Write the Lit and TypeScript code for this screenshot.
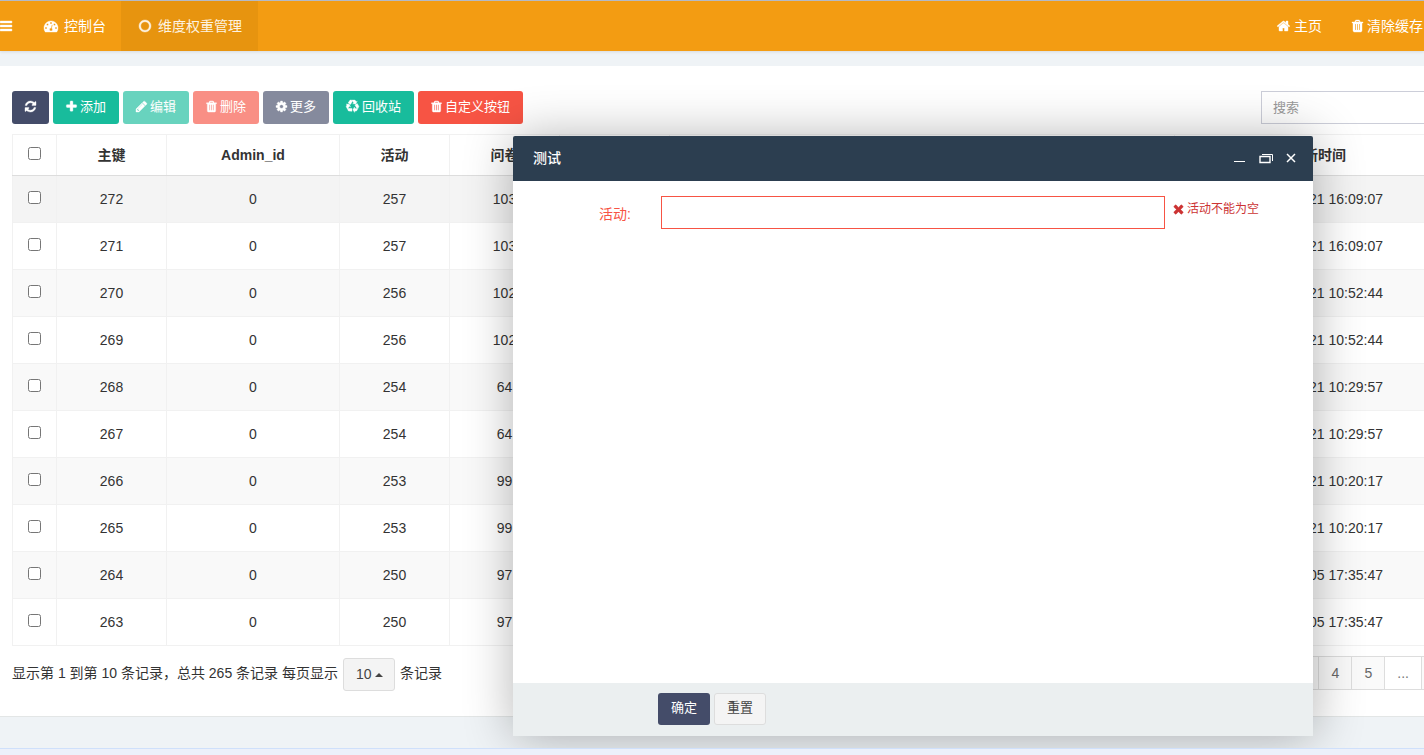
import { LitElement, html, css, svg } from "lit";
import { customElement, property } from "lit/decorators.js";

// Glyphs on a 1792 grid: [advance width, outline]
const GLYPHS: Record<string, [number, string]> = {
  bars: [1536, "M1664 1344v128q0 26-19 45t-45 19h-1408q-26 0-45-19t-19-45v-128q0-26 19-45t45-19h1408q26 0 45 19t19 45zm0-512v128q0 26-19 45t-45 19h-1408q-26 0-45-19t-19-45v-128q0-26 19-45t45-19h1408q26 0 45 19t19 45zm0-512v128q0 26-19 45t-45 19h-1408q-26 0-45-19t-19-45v-128q0-26 19-45t45-19h1408q26 0 45 19t19 45z"],
  circle: [1536, "M896 352q-148 0-273 73t-198 198-73 273 73 273 198 198 273 73 273-73 198-198 73-273-73-273-198-198-273-73zm768 544q0 209-103 385.500t-279.500 279.500-385.500 103-385.500-103-279.500-279.500-103-385.500 103-385.500 279.500-279.500 385.500-103 385.500 103 279.500 279.500 103 385.500z"],
  plus: [1408, "M1600 736v192q0 40-28 68t-68 28h-416v416q0 40-28 68t-68 28h-192q-40 0-68-28t-28-68v-416h-416q-40 0-68-28t-28-68v-192q0-40 28-68t68-28h416v-416q0-40 28-68t68-28h192q40 0 68 28t28 68v416h416q40 0 68 28t28 68z"],
  pencil: [1536, "M491 1536l91-91-235-235-91 91v107h128v128h107zm523-928q0-22-22-22-10 0-17 7l-542 542q-7 7-7 17 0 22 22 22 10 0 17-7l542-542q7-7 7-17zm-54-192l416 416-832 832h-416v-416zm683 96q0 53-37 90l-166 166-416-416 166-165q36-38 90-38 53 0 91 38l235 234q37 39 37 91z"],
  trash: [1408, "M704 1376v-704q0-14-9-23t-23-9h-64q-14 0-23 9t-9 23v704q0 14 9 23t23 9h64q14 0 23-9t9-23zm256 0v-704q0-14-9-23t-23-9h-64q-14 0-23 9t-9 23v704q0 14 9 23t23 9h64q14 0 23-9t9-23zm256 0v-704q0-14-9-23t-23-9h-64q-14 0-23 9t-9 23v704q0 14 9 23t23 9h64q14 0 23-9t9-23zm-544-992h448l-48-117q-7-9-17-11h-317q-10 2-17 11zm928 32v64q0 14-9 23t-23 9h-96v948q0 83-47 143.500t-113 60.500h-832q-66 0-113-58.500t-47-141.500v-952h-96q-14 0-23-9t-9-23v-64q0-14 9-23t23-9h309l70-167q15-37 54-63t79-26h320q40 0 79 26t54 63l70 167h309q14 0 23 9t9 23z"],
  cog: [1536, "M1152 896q0-106-75-181t-181-75-181 75-75 181 75 181 181 75 181-75 75-181zm512-109v222q0 12-8 23t-20 13l-185 28q-19 54-39 91 35 50 107 138 10 12 10 25t-9 23q-27 37-99 108t-94 71q-12 0-26-9l-138-108q-44 23-91 38-16 136-29 186-7 28-36 28h-222q-14 0-24.500-8.500t-11.500-21.500l-28-184q-49-16-90-37l-141 107q-10 9-25 9-14 0-25-11-126-114-165-168-7-10-7-23 0-12 8-23 15-21 51-66.500t54-70.500q-27-50-41-99l-183-27q-13-2-21-12.500t-8-23.500v-222q0-12 8-23t19-13l186-28q14-46 39-92-40-57-107-138-10-12-10-24 0-10 9-23 26-36 98.500-107.500t94.500-71.500q13 0 26 10l138 107q44-23 91-38 16-136 29-186 7-28 36-28h222q14 0 24.500 8.500t11.500 21.500l28 184q49 16 90 37l142-107q9-9 24-9 13 0 25 10 129 119 165 170 7 8 7 22 0 12-8 23-15 21-51 66.500t-54 70.500q26 50 41 98l183 28q13 2 21 12.500t8 23.500z"],
  refresh: [1536, "M1639 1056q0 5-1 7-64 268-268 434.500t-478 166.500q-146 0-282.500-55t-243.500-157l-129 129q-19 19-45 19t-45-19-19-45v-448q0-26 19-45t45-19h448q26 0 45 19t19 45-19 45l-137 137q71 66 161 102t187 36q134 0 250-65t186-179q11-17 53-117 8-23 30-23h192q13 0 22.500 9.500t9.500 22.500zm25-800v448q0 26-19 45t-45 19h-448q-26 0-45-19t-19-45 19-45l138-138q-148-137-349-137-134 0-250 65t-186 179q-11 17-53 117-8 23-30 23h-199q-13 0-22.500-9.500t-9.500-22.500v-7q65-268 270-434.500t480-166.500q146 0 284 55.500t245 156.500l130-129q19-19 45-19t45 19 19 45z"],
  home: [1664, "M1472 992v480q0 26-19 45t-45 19h-384v-384h-256v384h-384q-26 0-45-19t-19-45v-480q0-1 .5-3t.5-3l575-474 575 474q1 2 1 6zm223-69l-62 74q-8 9-21 11h-3q-13 0-21-7l-692-577-692 577q-12 8-24 7-13-2-21-11l-62-74q-8-10-7-23.500t11-21.500l719-599q32-26 76-26t76 26l244 204v-195q0-14 9-23t23-9h192q14 0 23 9t9 23v408l219 182q10 8 11 21.500t-7 23.500z"],
  dashboard: [1792, "M384 1152q0-53-37.500-90.500t-90.500-37.500-90.500 37.500-37.500 90.500 37.500 90.500 90.500 37.500 90.500-37.500 37.500-90.500zm192-448q0-53-37.500-90.500t-90.500-37.500-90.500 37.500-37.500 90.500 37.500 90.500 90.500 37.500 90.500-37.500 37.500-90.500zm428 481l101-382q6-26-7.500-48.500t-38.500-29.500-48 6.500-30 39.500l-101 382q-60 5-107 43.500t-63 98.500q-20 77 20 146t117 89 146-20 89-117q16-60-6-117t-72-91zm660-33q0-53-37.500-90.500t-90.500-37.500-90.500 37.500-37.500 90.500 37.500 90.500 90.500 37.500 90.500-37.500 37.500-90.500zm-640-640q0-53-37.500-90.500t-90.500-37.500-90.500 37.500-37.500 90.500 37.500 90.500 90.500 37.500 90.500-37.500 37.500-90.500zm448 192q0-53-37.500-90.500t-90.500-37.500-90.500 37.500-37.500 90.500 37.500 90.500 90.500 37.500 90.500-37.500 37.500-90.500zm320 448q0 261-141 483-19 29-54 29h-1402q-35 0-54-29-141-221-141-483 0-182 71-348t191-286 286-191 348-71 348 71 286 191 191 286 71 348z"],
  times: [1408, "M1490 1322q0 40-28 68l-136 136q-28 28-68 28t-68-28l-294-294-294 294q-28 28-68 28t-68-28l-136-136q-28-28-28-68t28-68l294-294-294-294q-28-28-28-68t28-68l136-136q28-28 68-28t68 28l294 294 294-294q28-28 68-28t68 28l136 136q28 28 28 68t-28 68l-294 294 294 294q28 28 28 68z"],
  recycle: [1792, "M836 1169l-15 368-2 22-420-29q-36-3-67-31.500t-47-65.500q-11-27-14.500-55t4-65 12-55 21.500-64 19-53q78 12 509 28zm-387-586l180 379-147-92q-63 72-111.500 144.500t-72.500 125-39.500 94.500-18.500 63l-4 21-190-357q-17-26-18-56t6-47l8-18q35-63 114-188l-140-86zm1231 517l-188 359q-12 29-36.500 46.500t-43.500 20.500l-18 4q-71 7-219 12l8 164-230-367 211-362 7 173q170 16 283 5t170-33zm-785-924q-47 63-265 435l-317-187-19-12 225-356q20-31 60-45t80-10q24 2 48.500 12t42 21 41.500 33 36 34.500 36 39.500 32 35zm655 307l212 363q18 37 12.500 76t-27.500 74q-13 20-33 37t-38 28-48.500 22-47 16-51.500 14-46 12q-34-72-265-436l313-195zm-143-226l142-83-220 373-419-20 151-86q-34-89-75-166t-75.500-123.500-64.500-80-47-46.500l-17-13 405 1q31-3 58 10.500t39 28.500l11 15q39 61 112 190z"],
};

@customElement("fa-icon")
class FaIcon extends LitElement {
  static styles = css`
    :host { display: inline-flex; flex: none; }
    svg { display: block; fill: currentColor; stroke: currentColor; stroke-width: 50; }
  `;
  @property() name = "plus";
  @property({ type: Number }) size = 13;
  render() {
    const [advance, outline] = GLYPHS[this.name];
    const width = Math.floor((advance / 1792) * this.size + 0.8);
    return html`<svg aria-hidden="true" width=${width} height=${this.size} overflow="visible"
      viewBox="${(1792 - advance) / 2} 0 ${advance} 1792">${svg`<path d=${outline}></path>`}</svg>`;
  }
}

const TOOLS = [
  { icon: "refresh", text: "", tone: "navy" },
  { icon: "plus", text: "添加", tone: "green" },
  { icon: "pencil", text: "编辑", tone: "green", off: true },
  { icon: "trash", text: "删除", tone: "red", off: true },
  { icon: "cog", text: "更多", tone: "navy", off: true },
  { icon: "recycle", text: "回收站", tone: "green" },
  { icon: "trash", text: "自定义按钮", tone: "red" },
];

const ROWS = [
  [272, 257, 103, "21 16:09:07"],
  [271, 257, 103, "21 16:09:07"],
  [270, 256, 102, "21 10:52:44"],
  [269, 256, 102, "21 10:52:44"],
  [268, 254, 64, "21 10:29:57"],
  [267, 254, 64, "21 10:29:57"],
  [266, 253, 99, "21 10:20:17"],
  [265, 253, 99, "21 10:20:17"],
  [264, 250, 97, "05 17:35:47"],
  [263, 250, 97, "05 17:35:47"],
];

@customElement("app-root")
class AppRoot extends LitElement {
  static styles = css`
    :host {
      display: flex;
      flex-direction: column;
      position: relative;
      height: 100vh;
      overflow: hidden;
      box-sizing: border-box;
      border-top: 1px solid #b4bac6;
      background: #eff3f6;
      color: #333;
      font: 14px/20px "Liberation Sans", "Noto Sans CJK SC", sans-serif;
    }
    * { box-sizing: border-box; }
    button, input, select { font-family: inherit; margin: 0; }
    a { color: inherit; text-decoration: none; }

    .top {
      display: flex;
      flex: none;
      height: 50px;
      background: #f39c12;
      color: #fff;
      box-shadow: 0 1px 3px rgba(0, 0, 0, 0.1);
    }
    .top a, .menu { display: flex; align-items: center; }
    .menu { padding: 0 15px 0 0; border: 0; background: none; color: inherit; }
    .tab { padding: 0 15px; gap: 4px; }
    .tab.current { padding-right: 16px; background: #e7940f; color: #fdf3e2; }
    .slot { display: flex; width: 18px; justify-content: center; }
    .links { display: flex; gap: 30px; margin-left: auto; padding-right: 1px; }
    .links a { gap: 4px; }

    .panel {
      flex: none;
      margin-top: 15px;
      padding: 25px 0 26px 12px;
      width: calc(100% + 38px);
      background: #fff;
      border-bottom: 1px solid #e3e6e6;
    }
    .tools { display: flex; gap: 4px; height: 33px; margin-bottom: 10px; }
    .btn {
      display: flex;
      align-items: center;
      gap: 3px;
      padding: 0 12px 2px;
      border: 1px solid transparent;
      border-radius: 3px;
      color: #fff;
      font-size: 13px;
      line-height: 20px;
      white-space: nowrap;
    }
    .tools .btn { padding: 0 12px 2px; }
    .navy { background: #444c69; }
    .green { background: #18bc9c; }
    .red { background: #f75444; }
    .plain { background: #f4f4f4; border-color: #ddd; color: #444; }
    .off { opacity: 0.65; }
    .search {
      margin-left: auto;
      width: 201px;
      padding: 0 11px;
      border: 1px solid #ccced9;
      border-radius: 0;
      font-size: 13px;
      outline: 0;
    }
    .search::placeholder { color: #999; }

    table { width: 100%; border-collapse: collapse; table-layout: fixed; }
    th, td {
      padding: 0;
      height: 47px;
      border: 1px solid #f1f1f1;
      text-align: center;
      white-space: nowrap;
    }
    th { height: 41px; border-bottom-color: #ddd; }
    tbody tr:nth-child(odd) { background: #f9f9f9; }
    tbody tr.hovered { background: #f4f4f4; }
    td input, th input { display: block; width: 13px; height: 13px; margin: 0 auto 3px; }
    .c-check { width: 44px; }
    .c-id { width: 110px; }
    .c-admin { width: 173px; }
    .c-time { width: 287px; }

    .bottom { display: flex; justify-content: space-between; height: 34px; margin-top: 10px; }
    .info { display: flex; align-items: center; gap: 5px; }
    .size { position: relative; display: flex; margin-top: 2px; }
    .size select {
      width: 52px;
      height: 33px;
      padding: 0 12px;
      appearance: none;
      border: 1px solid #ddd;
      border-radius: 3px;
      background: #f4f4f4;
      color: #444;
      font-size: 14px;
    }
    .caret {
      position: absolute;
      right: 12px;
      top: 15px;
      border: 4px solid transparent;
      border-top: 0;
      border-bottom-color: #444;
      pointer-events: none;
    }
    .pages { display: flex; margin: 0; padding: 0; list-style: none; }
    .pages a {
      display: flex;
      align-items: center;
      justify-content: center;
      height: 34px;
      min-width: 34px;
      margin-left: -1px;
      padding: 0 12px;
      border: 1px solid #ddd;
      background: #fafafa;
      color: #666;
    }
    .pages a.gap { background: #fff; color: #777; }
    .pages a.end { width: 41px; }

    .status {
      flex: none;
      margin-top: auto;
      height: 7px;
      border-top: 1px solid #cfe0fb;
      background: #ecf0fa;
      position: relative;
      z-index: 2;
    }

    .dialog {
      position: absolute;
      z-index: 1;
      left: 513px;
      top: 135px;
      width: 800px;
      height: 600px;
      display: flex;
      flex-direction: column;
      background: #fff;
      border-radius: 2px;
      box-shadow: 1px 1px 50px rgba(0, 0, 0, 0.3);
    }
    .title {
      display: flex;
      align-items: center;
      height: 45px;
      padding: 0 17px 2px 20px;
      border-radius: 2px 2px 0 0;
      background: #2c3e50;
      color: #fff;
    }
    .title h2 { margin: 0 auto 0 0; font-size: 14px; line-height: 20px; font-weight: 500; }
    .title button { display: flex; padding: 0; border: 0; background: none; color: #fff; }
    .title button + button { margin-left: 13px; }
    .form { flex: 1; padding-top: 15px; }
    .field { display: flex; color: #f75444; }
    .field label { width: 18.5%; padding: 8px 30px 0 0; text-align: right; }
    .field input {
      width: 63%;
      height: 33px;
      padding: 0 12px;
      border: 1px solid #f75444;
      border-radius: 0;
      outline: 0;
    }
    .error { display: flex; align-items: center; gap: 3px; height: 26px; padding-left: 8px; color: #c33; font-size: 12px; }
    .actions { display: flex; gap: 4px; padding: 10px 0 11px 145px; background: #ebeff0; }
    .actions .btn { height: 32px; }
  `;

  render() {
    return html`
      <header class="top">
        <button class="menu" aria-label="菜单"><fa-icon name="bars" size="14"></fa-icon></button>
        <a class="tab" href="#"><span class="slot"><fa-icon name="dashboard" size="14"></fa-icon></span>控制台</a>
        <a class="tab current" href="#"><span class="slot"><fa-icon name="circle" size="14"></fa-icon></span>维度权重管理</a>
        <nav class="links">
          <a href="#"><fa-icon name="home" size="14"></fa-icon>主页</a>
          <a href="#"><fa-icon name="trash" size="14"></fa-icon>清除缓存</a>
        </nav>
      </header>

      <main class="panel">
        <div class="tools">
          ${TOOLS.map((t) => html`<button class="btn ${t.tone} ${t.off ? "off" : ""}" aria-label=${t.text || "刷新"}>
            <fa-icon name=${t.icon}></fa-icon>${t.text}</button>`)}
          <input class="search" type="search" placeholder="搜索" aria-label="搜索" />
        </div>

        <table>
          <colgroup>
            <col class="c-check" /><col class="c-id" /><col class="c-admin" /><col class="c-id" />
            <col class="c-id" /><col class="c-id" /><col /><col class="c-time" />
          </colgroup>
          <thead>
            <tr>
              <th><input type="checkbox" aria-label="全选" /></th>
              <th>主键</th><th>Admin_id</th><th>活动</th><th>问卷</th><th></th><th></th><th>更新时间</th>
            </tr>
          </thead>
          <tbody>
            ${ROWS.map(([id, act, paper, time], i) => html`<tr class=${i === 0 ? "hovered" : ""}>
              <td><input type="checkbox" aria-label=${id} /></td>
              <td>${id}</td><td>0</td><td>${act}</td><td>${paper}</td><td></td><td></td><td>2021-01-${time}</td>
            </tr>`)}
          </tbody>
        </table>

        <div class="bottom">
          <div class="info">
            <span>显示第 1 到第 10 条记录，总共 265 条记录 每页显示</span>
            <span class="size">
              <select aria-label="每页显示"><option>10</option></select><i class="caret"></i>
            </span>
            <span>条记录</span>
          </div>
          <ul class="pages">
            ${["1", "2", "3", "4", "5"].map((p) => html`<li><a href="#">${p}</a></li>`)}
            <li><a class="gap" href="#">...</a></li>
            <li><a class="end" href="#" aria-label="下一页"></a></li>
          </ul>
        </div>
      </main>

      <div class="status"></div>

      <section class="dialog" role="dialog" aria-label="测试">
        <div class="title">
          <h2>测试</h2>
          <button aria-label="最小化"><svg width="12" height="14" viewBox="0 0 12 14"><path d="M0 10.500h11" stroke="currentColor" /></svg></button>
          <button aria-label="最大化"><svg width="14" height="14" viewBox="0 0 14 14" fill="none" stroke="currentColor">
            <path d="M3 3.500h10.500v6.500" /><path d="M1 5.500h10v6h-10z" stroke-width="1.400" /></svg></button>
          <button aria-label="关闭"><svg width="10" height="14" viewBox="0 0 10 14"><path d="M1 3l8 8M9 3l-8 8" stroke="currentColor" stroke-width="1.500" /></svg></button>
        </div>
        <form class="form" @submit=${(e: Event) => e.preventDefault()}>
          <div class="field">
            <label for="activity">活动:</label>
            <input id="activity" type="text" />
            <span class="error"><fa-icon name="times" size="14"></fa-icon>活动不能为空</span>
          </div>
        </form>
        <div class="actions">
          <button class="btn navy">确定</button>
          <button class="btn plain">重置</button>
        </div>
      </section>
    `;
  }
}
